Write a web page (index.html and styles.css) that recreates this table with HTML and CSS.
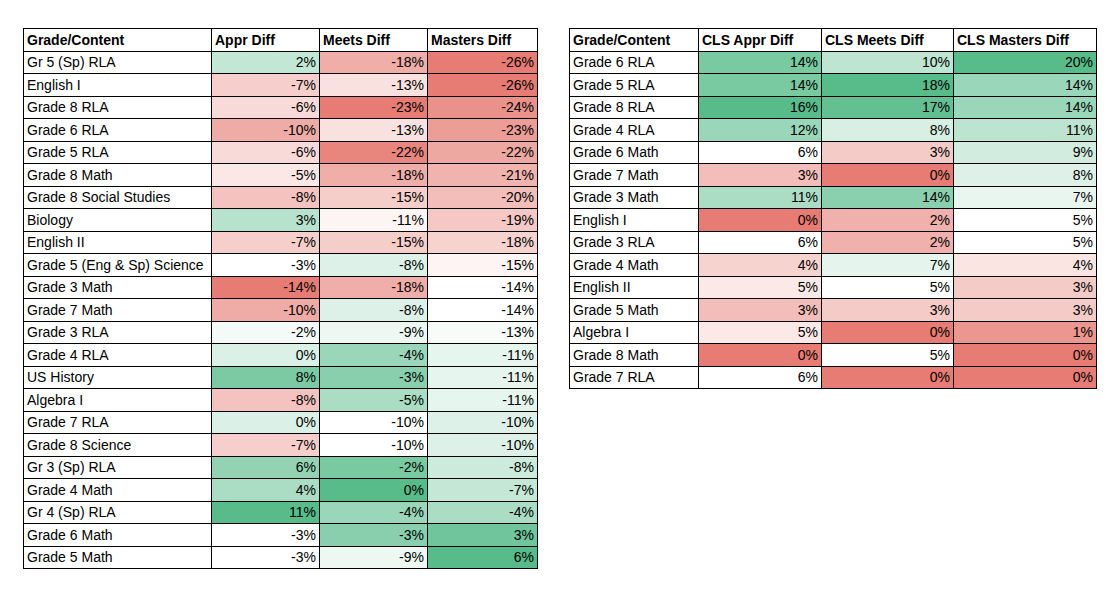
FILE: index.html
```html
<!DOCTYPE html>
<html lang="en">
<head>
<meta charset="utf-8">
<title>Grade Content Diff</title>
<link rel="stylesheet" href="styles.css">
</head>
<body>
<div class="page">
  <table class="grid grid-left scaled">
    <colgroup><col class="c-name-l"><col class="c-l2"><col class="c-l3"><col class="c-l4"></colgroup>
    <thead>
      <tr><th>Grade/Content</th><th>Appr Diff</th><th>Meets Diff</th><th>Masters Diff</th></tr>
    </thead>
    <tbody>
      <tr><td>Gr 5 (Sp) RLA</td><td>2%</td><td>-18%</td><td>-26%</td></tr>
      <tr><td>English I</td><td>-7%</td><td>-13%</td><td>-26%</td></tr>
      <tr><td>Grade 8 RLA</td><td>-6%</td><td>-23%</td><td>-24%</td></tr>
      <tr><td>Grade 6 RLA</td><td>-10%</td><td>-13%</td><td>-23%</td></tr>
      <tr><td>Grade 5 RLA</td><td>-6%</td><td>-22%</td><td>-22%</td></tr>
      <tr><td>Grade 8 Math</td><td>-5%</td><td>-18%</td><td>-21%</td></tr>
      <tr><td>Grade 8 Social Studies</td><td>-8%</td><td>-15%</td><td>-20%</td></tr>
      <tr><td>Biology</td><td>3%</td><td>-11%</td><td>-19%</td></tr>
      <tr><td>English II</td><td>-7%</td><td>-15%</td><td>-18%</td></tr>
      <tr><td>Grade 5 (Eng &amp; Sp) Science</td><td>-3%</td><td>-8%</td><td>-15%</td></tr>
      <tr><td>Grade 3 Math</td><td>-14%</td><td>-18%</td><td>-14%</td></tr>
      <tr><td>Grade 7 Math</td><td>-10%</td><td>-8%</td><td>-14%</td></tr>
      <tr><td>Grade 3 RLA</td><td>-2%</td><td>-9%</td><td>-13%</td></tr>
      <tr><td>Grade 4 RLA</td><td>0%</td><td>-4%</td><td>-11%</td></tr>
      <tr><td>US History</td><td>8%</td><td>-3%</td><td>-11%</td></tr>
      <tr><td>Algebra I</td><td>-8%</td><td>-5%</td><td>-11%</td></tr>
      <tr><td>Grade 7 RLA</td><td>0%</td><td>-10%</td><td>-10%</td></tr>
      <tr><td>Grade 8 Science</td><td>-7%</td><td>-10%</td><td>-10%</td></tr>
      <tr><td>Gr 3 (Sp) RLA</td><td>6%</td><td>-2%</td><td>-8%</td></tr>
      <tr><td>Grade 4 Math</td><td>4%</td><td>0%</td><td>-7%</td></tr>
      <tr><td>Gr 4 (Sp) RLA</td><td>11%</td><td>-4%</td><td>-4%</td></tr>
      <tr><td>Grade 6 Math</td><td>-3%</td><td>-3%</td><td>3%</td></tr>
      <tr><td>Grade 5 Math</td><td>-3%</td><td>-9%</td><td>6%</td></tr>
    </tbody>
  </table>

  <table class="grid grid-right scaled">
    <colgroup><col class="c-name-r"><col class="c-r2"><col class="c-r3"><col class="c-r4"></colgroup>
    <thead>
      <tr><th>Grade/Content</th><th>CLS Appr Diff</th><th>CLS Meets Diff</th><th>CLS Masters Diff</th></tr>
    </thead>
    <tbody>
      <tr><td>Grade 6 RLA</td><td>14%</td><td>10%</td><td>20%</td></tr>
      <tr><td>Grade 5 RLA</td><td>14%</td><td>18%</td><td>14%</td></tr>
      <tr><td>Grade 8 RLA</td><td>16%</td><td>17%</td><td>14%</td></tr>
      <tr><td>Grade 4 RLA</td><td>12%</td><td>8%</td><td>11%</td></tr>
      <tr><td>Grade 6 Math</td><td>6%</td><td>3%</td><td>9%</td></tr>
      <tr><td>Grade 7 Math</td><td>3%</td><td>0%</td><td>8%</td></tr>
      <tr><td>Grade 3 Math</td><td>11%</td><td>14%</td><td>7%</td></tr>
      <tr><td>English I</td><td>0%</td><td>2%</td><td>5%</td></tr>
      <tr><td>Grade 3 RLA</td><td>6%</td><td>2%</td><td>5%</td></tr>
      <tr><td>Grade 4 Math</td><td>4%</td><td>7%</td><td>4%</td></tr>
      <tr><td>English II</td><td>5%</td><td>5%</td><td>3%</td></tr>
      <tr><td>Grade 5 Math</td><td>3%</td><td>3%</td><td>3%</td></tr>
      <tr><td>Algebra I</td><td>5%</td><td>0%</td><td>1%</td></tr>
      <tr><td>Grade 8 Math</td><td>0%</td><td>5%</td><td>0%</td></tr>
      <tr><td>Grade 7 RLA</td><td>6%</td><td>0%</td><td>0%</td></tr>
    </tbody>
  </table>
</div>
<script src="script.js"></script>
</body>
</html>
```

FILE: styles.css
```css
html, body {
  margin: 0;
  padding: 0;
  background: #ffffff;
}

.page {
  display: flex;
  align-items: flex-start;
  gap: 31px;
  padding: 28px 0 0 23px;
  font-family: "Liberation Sans", Arial, sans-serif;
  font-size: 14px;
  color: #000000;
}

.grid {
  border-collapse: collapse;
  table-layout: fixed;
}

.grid-left { width: 515px; }
.grid-right { width: 528px; }

.c-name-l { width: 188px; }
.c-l2 { width: 108px; }
.c-l3 { width: 108px; }
.c-l4 { width: 110px; }

.c-name-r { width: 129px; }
.c-r2 { width: 123px; }
.c-r3 { width: 132px; }
.c-r4 { width: 143px; }

.grid th,
.grid td {
  border: 1px solid #000000;
  height: 21.5px;
  padding: 0 3px;
  white-space: nowrap;
  overflow: hidden;
  line-height: 16px;
  vertical-align: middle;
}

.grid th {
  font-weight: bold;
  text-align: left;
}

.grid td {
  text-align: right;
  font-weight: normal;
}

.grid td:first-child {
  text-align: left;
}
```

FILE: script.js
```js
(function () {
  var RED = [230, 124, 115];
  var WHITE = [255, 255, 255];
  var GREEN = [87, 187, 138];

  function mix(a, b, t) {
    return [0, 1, 2].map(function (i) {
      return Math.round(a[i] + (b[i] - a[i]) * t);
    });
  }

  document.querySelectorAll('table.scaled').forEach(function (table) {
    var rows = table.querySelectorAll('tbody tr');
    for (var c = 1; c <= 3; c++) {
      var cells = [];
      rows.forEach(function (r) { cells.push(r.children[c]); });
      var vals = cells.map(function (td) { return parseFloat(td.textContent); });
      var sorted = vals.slice().sort(function (a, b) { return a - b; });
      var min = sorted[0];
      var max = sorted[sorted.length - 1];
      var n = sorted.length;
      var pos = (n - 1) * 0.5;
      var lo = Math.floor(pos), hi = Math.ceil(pos);
      var mid = sorted[lo] + (sorted[hi] - sorted[lo]) * (pos - lo);
      cells.forEach(function (td, i) {
        var v = vals[i];
        var col;
        if (v <= mid) {
          var t = mid === min ? 1 : (v - min) / (mid - min);
          col = mix(RED, WHITE, t);
        } else {
          var t2 = max === mid ? 0 : (v - mid) / (max - mid);
          col = mix(WHITE, GREEN, t2);
        }
        td.style.backgroundColor = 'rgb(' + col.join(',') + ')';
      });
    }
  });
})();
```
